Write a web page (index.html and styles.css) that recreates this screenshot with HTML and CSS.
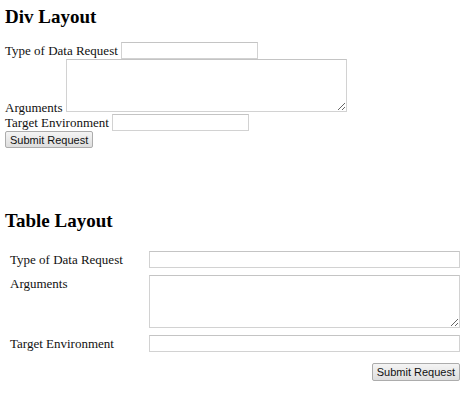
FILE: index.html
```html
<!DOCTYPE html>
<html>
<head>
<meta charset="utf-8">
<title>Layouts</title>
<link rel="stylesheet" href="styles.css">
</head>
<body>
<section class="div-layout">
  <h1 class="title">Div Layout</h1>
  <div class="row">Type of Data Request <input class="field" type="text"></div>
  <div class="row">Arguments <textarea class="area"></textarea></div>
  <div class="row">Target Environment <input class="field" type="text"></div>
  <div class="row"><button class="btn" type="button">Submit Request</button></div>
</section>
<section class="table-layout">
  <h1 class="title">Table Layout</h1>
  <table class="form-table">
    <tr>
      <td class="lbl">Type of Data Request</td>
      <td class="fld"><input class="wide" type="text"></td>
    </tr>
    <tr>
      <td class="lbl">Arguments</td>
      <td class="fld"><textarea class="wide-area"></textarea></td>
    </tr>
    <tr>
      <td class="lbl">Target Environment</td>
      <td class="fld"><input class="wide" type="text"></td>
    </tr>
    <tr>
      <td class="lbl"></td>
      <td class="fld actions"><button class="btn" type="button">Submit Request</button></td>
    </tr>
  </table>
</section>
</body>
</html>
```

FILE: styles.css
```css
html, body {
  background: #ffffff;
}
body {
  margin: 0;
  padding: 6px 5px 0;
  font: 13px "Liberation Serif", "Times New Roman", serif;
  color: #111111;
}
.title {
  font-size: 19px;
  line-height: 22px;
  font-weight: bold;
  margin: 0 0 14px;
  color: #000000;
}
.row {
  margin: 0;
  line-height: 13px;
}
.field,
.wide {
  box-sizing: border-box;
  height: 17px;
  margin: 0;
  padding: 0 2px;
  font: 11px "Liberation Sans", Arial, sans-serif;
  border: 1px solid #d2d2d2;
  border-top-color: #c4c4c4;
  background: #ffffff;
}
.field {
  width: 137px;
}
.area,
.wide-area {
  box-sizing: border-box;
  margin: 0;
  padding: 1px 2px;
  font: 11px "Liberation Sans", Arial, sans-serif;
  border: 1px solid #d2d2d2;
  border-top-color: #c4c4c4;
  background: #ffffff;
}
.area {
  width: 281px;
  height: 53px;
}
.btn {
  box-sizing: border-box;
  height: 17px;
  margin: 0;
  padding: 0 4px;
  font: 11px "Liberation Sans", Arial, sans-serif;
  color: #111111;
  border: 1px solid #acacac;
  border-radius: 2px;
  background: linear-gradient(#f4f4f4, #dedede);
}
.table-layout {
  margin-top: 62px;
}
.table-layout .title {
  margin-bottom: 16px;
}
.form-table {
  border-collapse: collapse;
  border-spacing: 0;
}
.form-table td {
  vertical-align: top;
  line-height: 17px;
  padding: 3px 0 4px;
}
.form-table .lbl {
  width: 136px;
  padding-left: 5px;
}
.form-table .fld {
  padding-left: 3px;
  padding-right: 3px;
}
.wide {
  width: 311px;
  vertical-align: top;
}
.wide-area {
  width: 311px;
  height: 53px;
  vertical-align: top;
}
.form-table .actions {
  text-align: right;
  padding-top: 7px;
}
.actions .btn {
  height: 18px;
  vertical-align: top;
}
```
